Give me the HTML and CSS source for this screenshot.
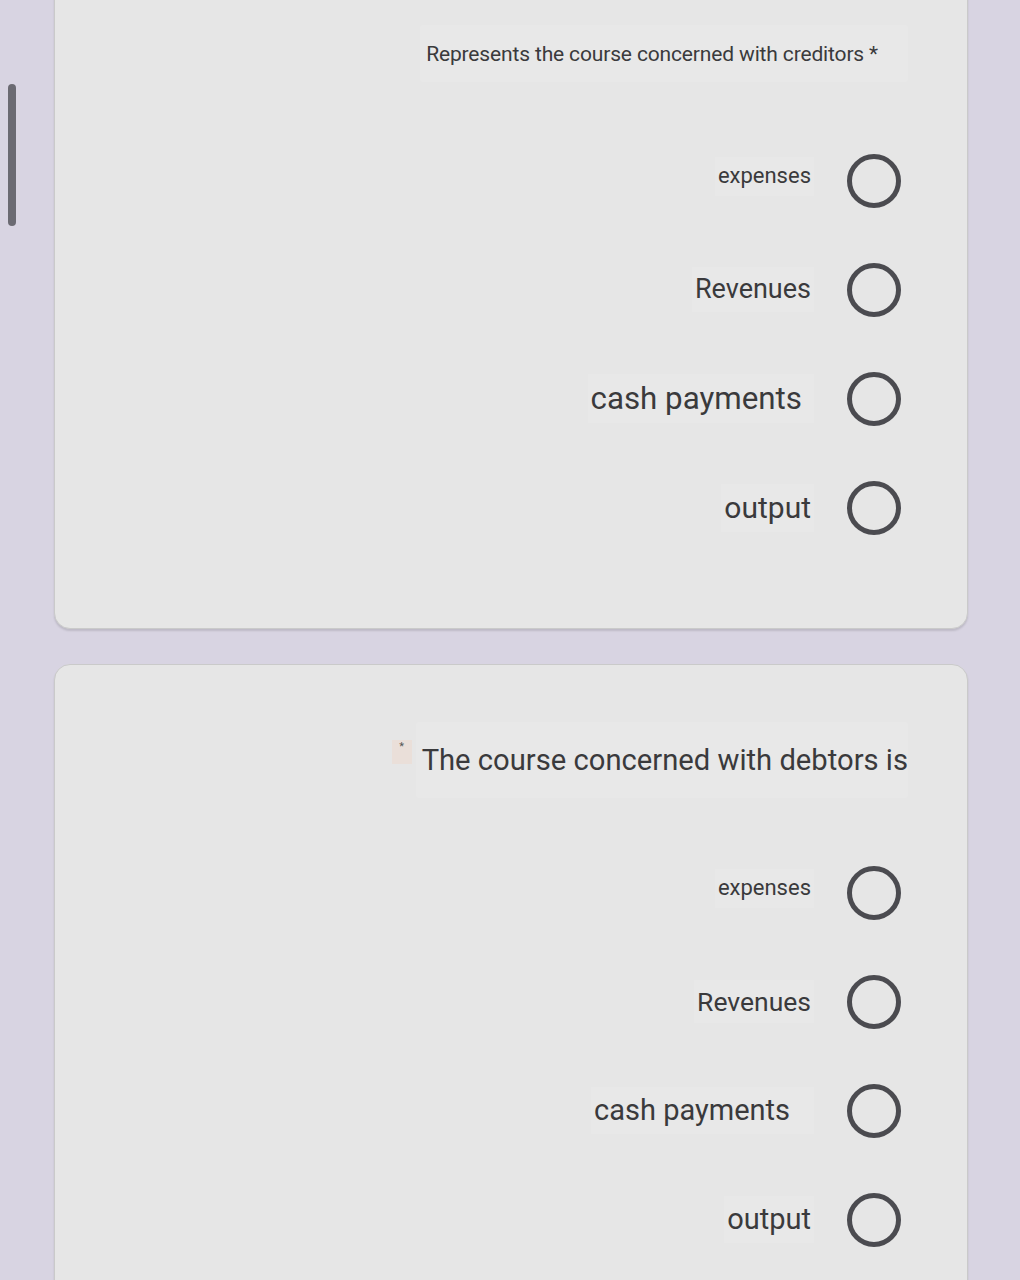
FILE: index.html
```html
<!DOCTYPE html>
<html>
<head>
<meta charset="utf-8">
<link rel="stylesheet" href="styles.css">
</head>
<body>
<div class="scrollbar"></div>
<main class="page">
  <section class="card card-first">
    <div class="question q-small"><span>Represents the course concerned with creditors *</span></div>
    <div class="options">
      <label class="option"><span class="label s22">expenses</span><span class="radio"></span></label>
      <label class="option"><span class="label s27">Revenues</span><span class="radio"></span></label>
      <label class="option"><span class="label s31 pad-s">cash payments</span><span class="radio"></span></label>
      <label class="option"><span class="label s30">output</span><span class="radio"></span></label>
    </div>
  </section>
  <section class="card card-second">
    <div class="question q-large"><span class="req">*</span><span>The course concerned with debtors is</span></div>
    <div class="options">
      <label class="option"><span class="label s22">expenses</span><span class="radio"></span></label>
      <label class="option"><span class="label s265">Revenues</span><span class="radio"></span></label>
      <label class="option"><span class="label s29 pad-r">cash payments</span><span class="radio"></span></label>
      <label class="option"><span class="label s29">output</span><span class="radio"></span></label>
    </div>
  </section>
</main>
</body>
</html>
```

FILE: styles.css
```css
html, body {
  margin: 0;
  padding: 0;
  background: #d8d4e2;
  font-family: Roboto, "Liberation Sans", sans-serif;
  color: #3a3a3c;
}
.scrollbar {
  position: absolute;
  left: 8px;
  top: 84px;
  width: 8px;
  height: 142px;
  border-radius: 4px;
  background: #6b6a72;
}
.page {
  display: flex;
  flex-direction: column;
  gap: 35px;
  padding: 0 52px 0 54px;
  height: 1280px;
  overflow: hidden;
}
.card {
  background: #e6e6e6;
  border: 1px solid #cacaca;
  border-radius: 16px;
  box-shadow: 0 2px 2px rgba(0, 0, 0, 0.12);
  display: flex;
  flex-direction: column;
  padding-right: 66px;
}
.card-first {
  margin-top: -20px;
  padding-top: 44px;
  padding-bottom: 66px;
  flex-shrink: 0;
}
.card-second {
  padding-top: 57px;
  padding-bottom: 60px;
  flex-shrink: 0;
}
.question {
  display: flex;
  justify-content: flex-end;
  align-items: center;
  background: #e8e8e8;
  align-self: flex-end;
  margin-right: -7px;
  border-radius: 2px;
}
.q-small {
  height: 57px;
  padding: 0 30px 0 6px;
  font-size: 21px;
  letter-spacing: -0.15px;
  margin-bottom: 44px;
}
.q-large {
  height: 76px;
  padding: 0 0 0 6px;
  font-size: 29.2px;
  margin-bottom: 40px;
  gap: 10px;
}
.req {
  font-size: 11px;
  color: #555;
  background: #eadfd9;
  width: 20px;
  height: 24px;
  align-self: flex-start;
  margin-top: 18px;
  margin-left: -30px;
  text-align: center;
  line-height: 14px;
}
.options {
  display: flex;
  flex-direction: column;
}
.option {
  height: 109px;
  display: flex;
  justify-content: flex-end;
  align-items: center;
  gap: 33px;
}
.label {
  background: #e8e8e8;
  padding: 6px 3px;
  line-height: 1.2;
}
.s22 { font-size: 22px; margin-top: -8px; }
.s265 { font-size: 26.5px; }
.s27 { font-size: 27px; }
.s29 { font-size: 29px; }
.s30 { font-size: 30px; }
.s31 { font-size: 31.3px; }
.pad-s { padding-right: 12px; }
.pad-r { padding-right: 24px; }
.radio {
  width: 44px;
  height: 44px;
  border: 5px solid #4b4b50;
  border-radius: 50%;
  flex-shrink: 0;
}
```
